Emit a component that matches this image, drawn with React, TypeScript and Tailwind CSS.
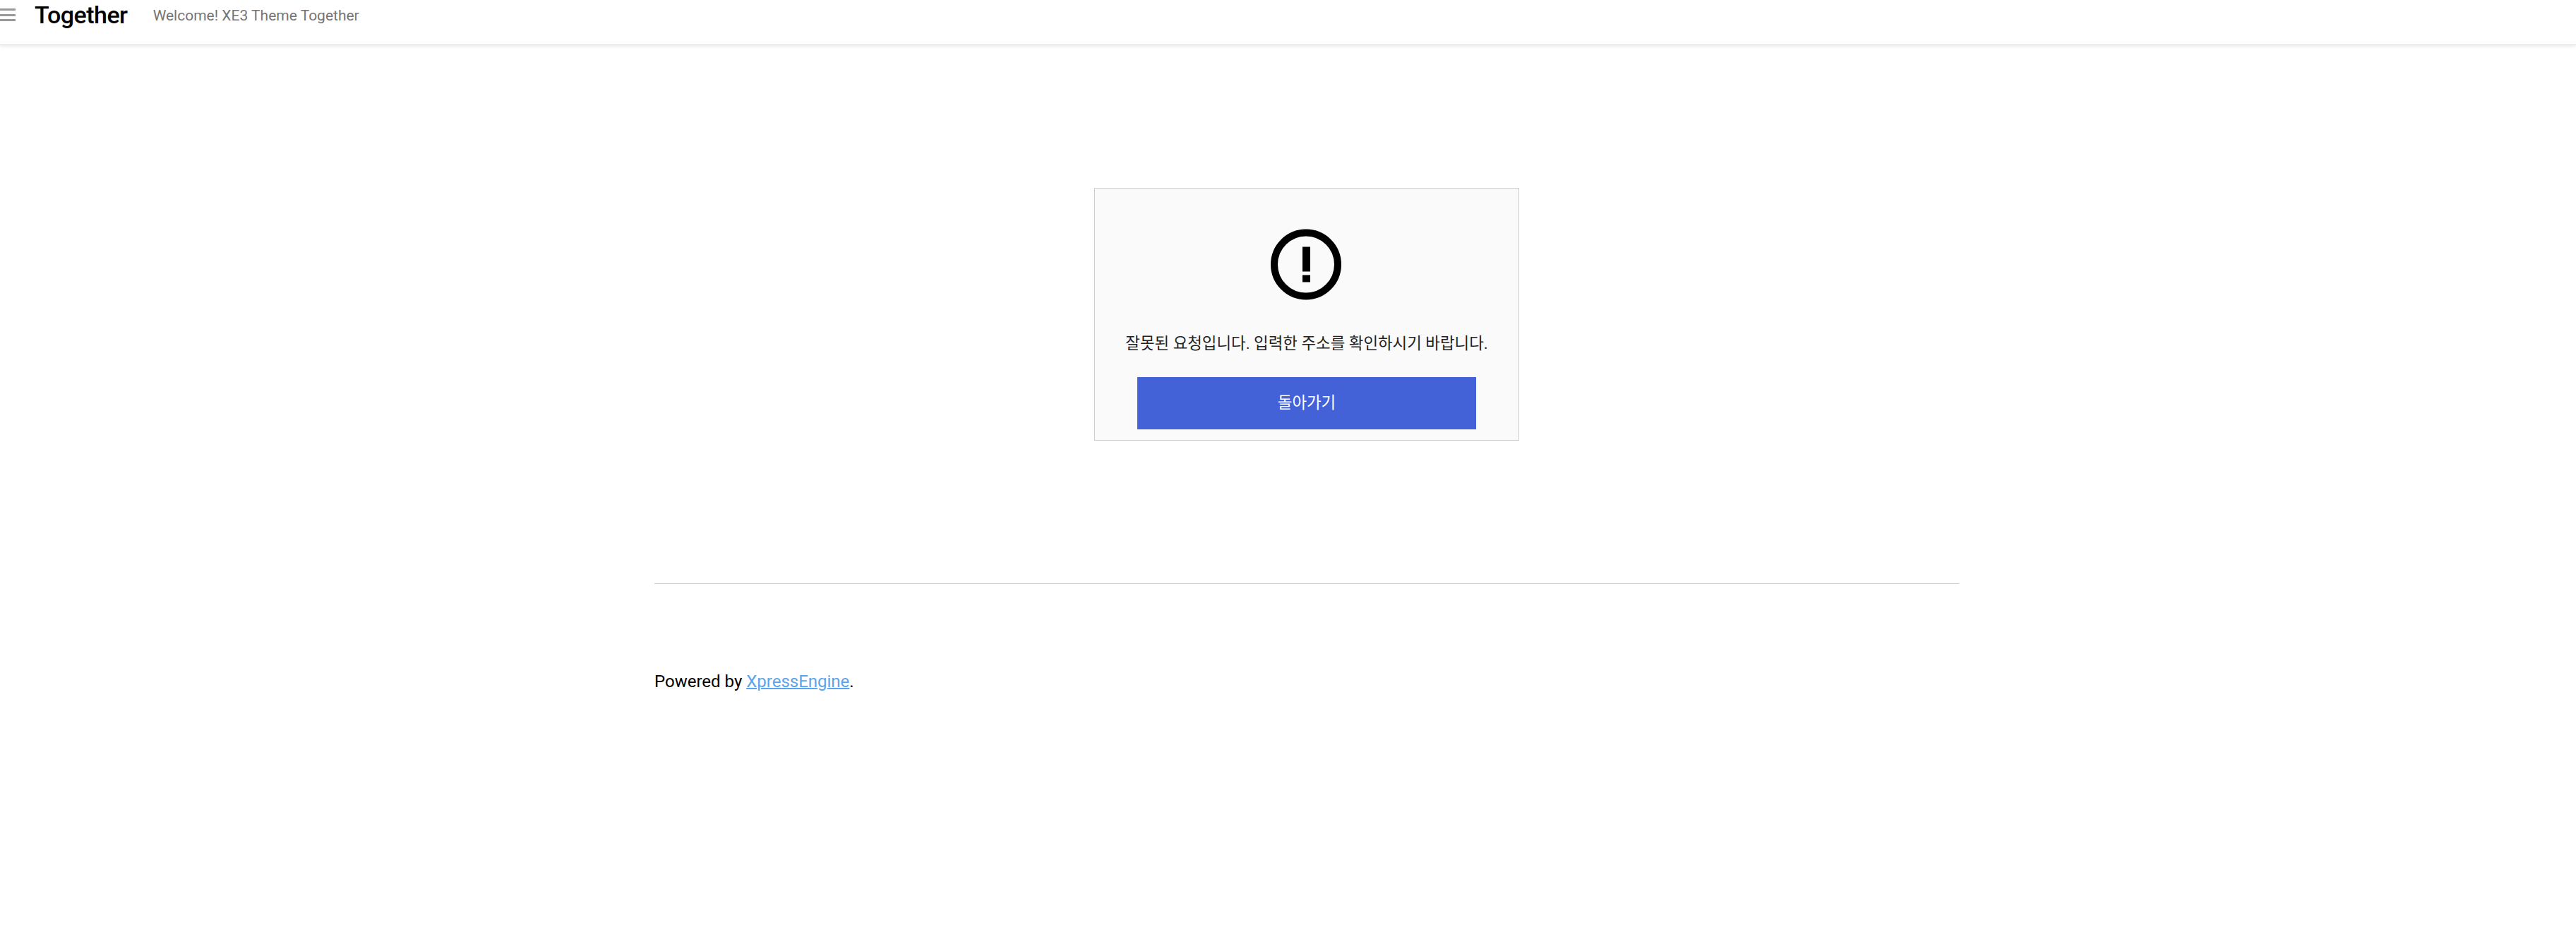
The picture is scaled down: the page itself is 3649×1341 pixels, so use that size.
import React from "react";

const font = { fontFamily: 'Roboto, "Noto Sans CJK KR", sans-serif' };

const App: React.FC = () => {
  return (
    <div className="min-h-[1341px] bg-white text-black" style={font}>
      {/* Header */}
      <header className="flex h-[64px] items-center border-b border-[#dcdcdc] shadow-[0_2px_4px_rgba(0,0,0,0.08)]">
        <div className="mb-[21px] flex h-[18px] w-[22px] flex-col justify-between">
          <span className="h-[3px] bg-[#999999]" />
          <span className="h-[3px] bg-[#999999]" />
          <span className="h-[3px] bg-[#999999]" />
        </div>
        <h1 className="mb-[21px] ml-[27px] text-[34px] leading-[40px] font-medium tracking-[-0.5px]">Together</h1>
        <p className="mb-[20px] ml-[36px] text-[21px] leading-[28px] text-[#757575]">Welcome! XE3 Theme Together</p>
      </header>

      {/* Content */}
      <main className="ml-[927px] w-[1848px]">
        <section className="mx-auto mt-[202px] flex h-[358px] w-[602px] flex-col items-center border border-[#cccccc] bg-[#fafafa]">
          <svg className="mr-[2px] mt-[57px] h-[101px] w-[100px]" viewBox="0 0 100 101" fill="none">
            <circle cx="50" cy="50.5" r="45" stroke="#000000" strokeWidth="10" />
            <rect x="45" y="25.5" width="11" height="35" fill="#000000" />
            <rect x="45" y="65.5" width="11" height="10" fill="#000000" />
          </svg>
          <p className="mt-[43px] text-[22.4px] leading-[36px] text-[#222222]">
            잘못된 요청입니다. 입력한 주소를 확인하시기 바랍니다.
          </p>
          <button className="mt-[30px] h-[74px] w-[480px] bg-[#4362d8] text-[22.4px] text-white">돌아가기</button>
        </section>

        <hr className="mt-[202px] border-t border-[#cccccc]" />

        <p className="mt-[120px] text-[24px] leading-[36px]">
          Powered by{" "}
          <a href="#" className="text-[#5ba3ec] underline decoration-2">
            XpressEngine
          </a>
          .
        </p>
      </main>
    </div>
  );
};

export default App;
